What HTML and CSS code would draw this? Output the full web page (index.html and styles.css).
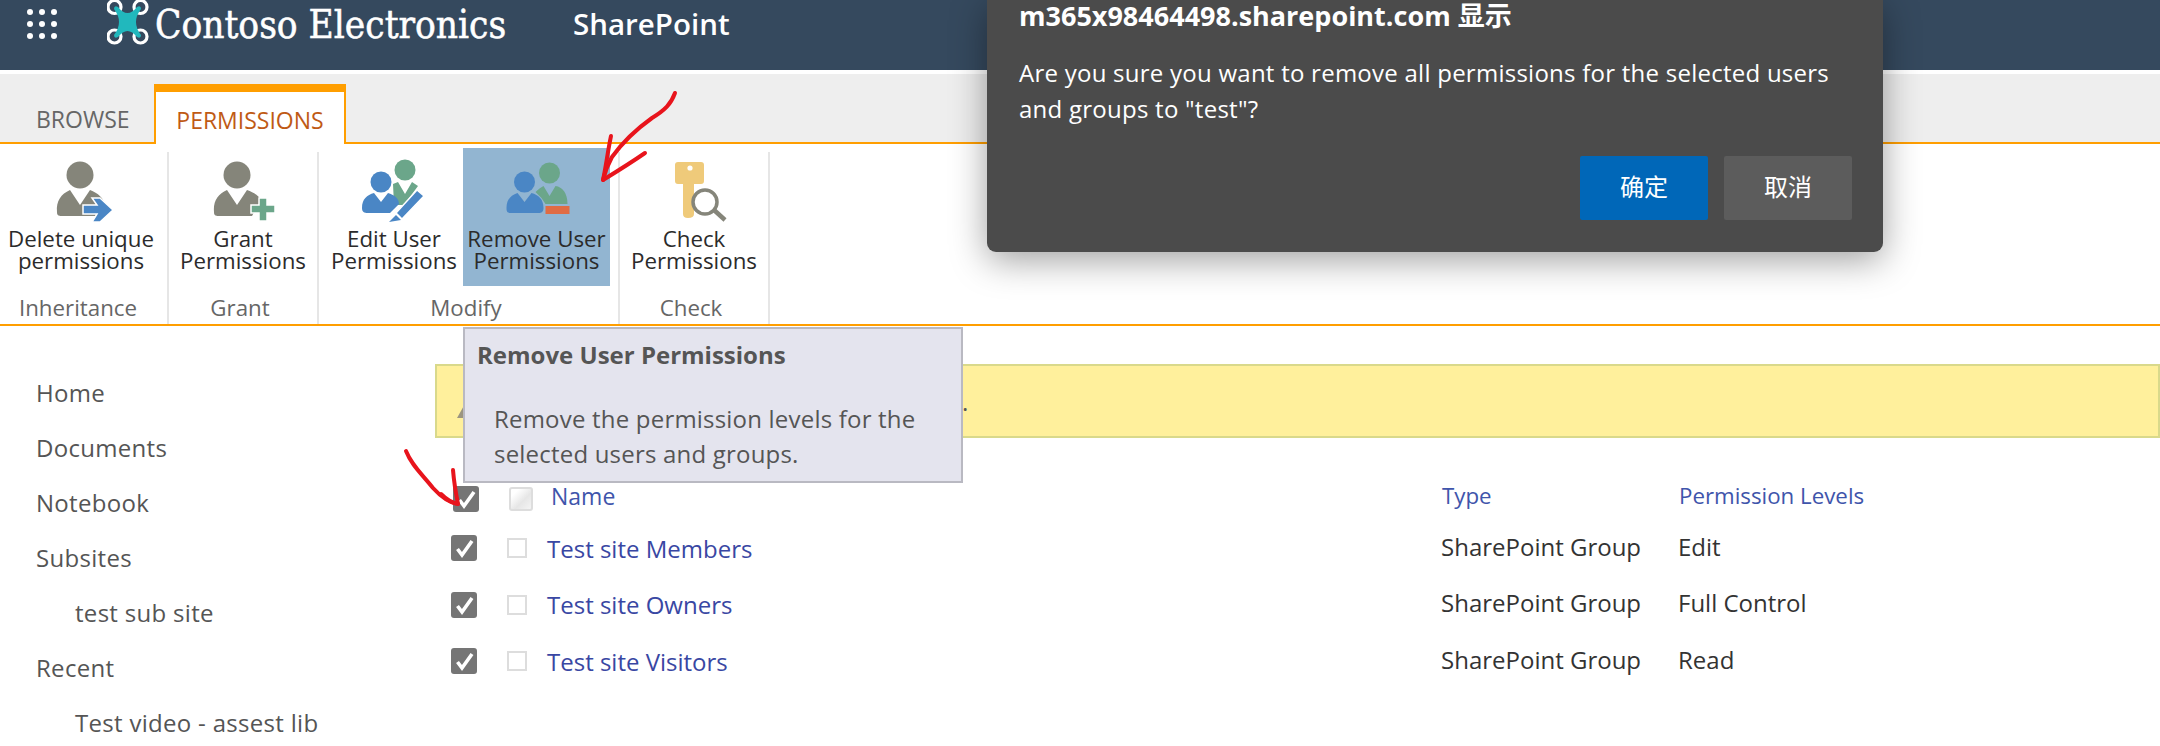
FILE: index.html
```html
<!DOCTYPE html>
<html lang="en">
<head>
<meta charset="utf-8">
<title>Permissions</title>
<link rel="stylesheet" href="styles.css">
</head>
<body>
<header class="suite-bar">
  <svg class="waffle" viewBox="0 0 36 36" width="36" height="36"><g fill="#fff"><circle cx="6" cy="6" r="3"/><circle cx="18" cy="6" r="3"/><circle cx="30" cy="6" r="3"/><circle cx="6" cy="18" r="3"/><circle cx="18" cy="18" r="3"/><circle cx="30" cy="18" r="3"/><circle cx="6" cy="30" r="3"/><circle cx="18" cy="30" r="3"/><circle cx="30" cy="30" r="3"/></g></svg>
  <svg class="logo" viewBox="107 0 44 46" width="44" height="46"><g fill="none" stroke="#fff" stroke-width="3.2"><circle cx="114.5" cy="7" r="6.5"/><circle cx="140.5" cy="7" r="6.5"/><circle cx="114.5" cy="36.5" r="6.5"/><circle cx="140.5" cy="36.5" r="6.5"/></g><path d="M114 9Q114 5 118 7Q127.5 19 137 7Q141 5 141 9Q131 22 141 35Q141 39 137 37Q127.5 25 118 37Q114 39 114 35Q124 22 114 9Z" fill="#21b8bd"/></svg>
  <span class="brand">Contoso Electronics</span>
  <span class="app">SharePoint</span>
</header>

<nav class="tab-strip">
  <span class="tab">BROWSE</span>
  <span class="tab tab-active">PERMISSIONS</span>
</nav>

<section class="ribbon">
  <div class="group g-inherit">
    <div class="buttons">
      <div class="rbtn b-delete">
        <svg class="ricon" viewBox="41 152 80 72"><circle cx="80" cy="175" r="13.5" fill="#85857a"/><path d="M57 212C56 201 61 194 70 190L80 205L90 190C98 193 104 198 105 206V216H62C58 216 57 215 57 212Z" fill="#85857a"/><path d="M83 205H97L92 198H100L113 210L100 222H92L97 214H83Z" fill="#4a86c5" stroke="#fff" stroke-width="1.5"/></svg>
        <span class="rlabel">Delete unique permissions</span>
      </div>
    </div>
    <div class="glabel">Inheritance</div>
  </div>
  <div class="group g-grant">
    <div class="buttons">
      <div class="rbtn b-grant">
        <svg class="ricon" viewBox="203 152 80 72"><circle cx="237" cy="175" r="13.5" fill="#85857a"/><path d="M214 212C213 201 218 194 227 190L237 205L247 190C255 193 259 196 261 200L252 216H219C215 216 214 215 214 212Z" fill="#85857a"/><path d="M259 198H267V205H275V213H267V221H259V213H251V205H259Z" fill="#6ba68a" stroke="#fff" stroke-width="1.5"/></svg>
        <span class="rlabel">Grant Permissions</span>
      </div>
    </div>
    <div class="glabel">Grant</div>
  </div>
  <div class="group g-modify">
    <div class="buttons">
      <div class="rbtn b-edit">
        <svg class="ricon" viewBox="354 152 80 72"><circle cx="405" cy="170" r="10.5" fill="#6ba68a"/><path d="M393 184L398 182L405 194L412 182L418 186L404 205H394Z" fill="#6ba68a"/><circle cx="381" cy="182" r="10.5" fill="#4a86c5"/><path d="M362 208C362 199 367 195 374 193L381 202L388 193C394 195 399 198 399 204L390 213H368C364 213 362 212 362 208Z" fill="#4a86c5"/><path d="M396 213L417 190L424 196L402 219Z" fill="#4a86c5" stroke="#fff" stroke-width="1.5"/><path d="M396 215L401 220L389 222Z" fill="#4a86c5"/></svg>
        <span class="rlabel">Edit User Permissions</span>
      </div>
      <div class="rbtn b-remove">
        <svg class="ricon" viewBox="496.5 152 80 72"><circle cx="549" cy="173" r="10.5" fill="#6ba68a"/><path d="M535 192C538 189 541 187 543 186L549 196L555 186C562 187 567 193 567 204H545L541 198Z" fill="#6ba68a"/><circle cx="524" cy="182" r="10.5" fill="#4a86c5"/><path d="M506 208C506 199 511 195 517 193L524 202L531 193C538 195 543 199 543 208C543 212 541 213 538 213H511C507 213 506 212 506 208Z" fill="#4a86c5"/><rect x="545" y="206" width="24" height="8" fill="#e06c44"/></svg>
        <span class="rlabel">Remove User Permissions</span>
      </div>
    </div>
    <div class="glabel">Modify</div>
  </div>
  <div class="group g-check">
    <div class="buttons">
      <div class="rbtn b-check">
        <svg class="ricon" viewBox="654 152 80 72"><path d="M678 162H701Q704 162 704 165V181Q704 184 701 184H694V214Q694 218 688 218Q683 218 683 214V184H678Q675 184 675 181V165Q675 162 678 162Z" fill="#efca7a"/><circle cx="690" cy="168" r="2.6" fill="#fff"/><circle cx="705" cy="202" r="12" fill="#fff" stroke="#85857a" stroke-width="3.5"/><path d="M714 210L725 220" stroke="#85857a" stroke-width="4.5" fill="none"/></svg>
        <span class="rlabel">Check Permissions</span>
      </div>
    </div>
    <div class="glabel">Check</div>
  </div>
</section>

<div class="main">
  <aside class="sidenav">
    <div class="nav-item">Home</div>
    <div class="nav-item">Documents</div>
    <div class="nav-item">Notebook</div>
    <div class="nav-item">Subsites</div>
    <div class="nav-item nav-sub">test sub site</div>
    <div class="nav-item">Recent</div>
    <div class="nav-item nav-sub">Test video - assest lib</div>
  </aside>
  <div class="content">
    <div class="notice"><span class="notice-mark"></span><span class="notice-dot">.</span></div>
    <div class="perm-grid perm-head">
      <span class="cb"><svg viewBox="0 0 26 26" width="26" height="26"><path d="M6.5 14L11 20L21 6" fill="none" stroke="#fff" stroke-width="3.6"/></svg></span>
      <span class="box box-head"></span>
      <span class="head-link head-name">Name</span>
      <span class="head-link">Type</span>
      <span class="head-link">Permission Levels</span>
    </div>
    <div class="perm-grid perm-row">
      <span class="cb"><svg viewBox="0 0 26 26" width="26" height="26"><path d="M6.5 14L11 20L21 6" fill="none" stroke="#fff" stroke-width="3.6"/></svg></span>
      <span class="box"></span>
      <span class="name-link">Test site Members</span>
      <span class="cell">SharePoint Group</span>
      <span class="cell">Edit</span>
    </div>
    <div class="perm-grid perm-row">
      <span class="cb"><svg viewBox="0 0 26 26" width="26" height="26"><path d="M6.5 14L11 20L21 6" fill="none" stroke="#fff" stroke-width="3.6"/></svg></span>
      <span class="box"></span>
      <span class="name-link">Test site Owners</span>
      <span class="cell">SharePoint Group</span>
      <span class="cell">Full Control</span>
    </div>
    <div class="perm-grid perm-row">
      <span class="cb"><svg viewBox="0 0 26 26" width="26" height="26"><path d="M6.5 14L11 20L21 6" fill="none" stroke="#fff" stroke-width="3.6"/></svg></span>
      <span class="box"></span>
      <span class="name-link">Test site Visitors</span>
      <span class="cell">SharePoint Group</span>
      <span class="cell">Read</span>
    </div>
  </div>
</div>

<div class="tooltip">
  <div class="tip-title">Remove User Permissions</div>
  <p class="tip-body">Remove the permission levels for the selected users and groups.</p>
</div>

<div class="dialog">
  <div class="dlg-title">m365x98464498.sharepoint.com 显示</div>
  <p class="dlg-text">Are you sure you want to remove all permissions for the selected users and groups to "test"?</p>
  <div class="dlg-actions">
    <span class="dlg-btn dlg-ok">确定</span>
    <span class="dlg-btn dlg-cancel">取消</span>
  </div>
</div>

<svg class="ink" viewBox="0 0 2160 746" width="2160" height="746">
  <g fill="none" stroke="#e8141c" stroke-width="4" stroke-linecap="round" stroke-linejoin="round">
    <path d="M675 93C671 104 665 110 652 118C638 128 622 143 612 157C607 166 605 172 603 180"/>
    <path d="M611 136C608 150 606 166 603 180C616 172 632 162 645 153"/>
    <path d="M406 451C412 466 422 474 433 488C442 498 450 503 458 504"/>
    <path d="M453 470C454 482 456 494 458 504C452 503 446 499 441 494"/>
  </g>
</svg>
</body>
</html>
```

FILE: styles.css
```css
* { box-sizing: border-box; }
html, body { margin: 0; padding: 0; }
body {
  position: relative;
  width: 2160px;
  height: 746px;
  overflow: hidden;
  background: #fff;
  font-family: "Open Sans", "Noto Sans CJK SC", sans-serif;
  font-size: 24px;
  color: #444;
}

/* suite bar */
.suite-bar {
  display: flex;
  align-items: flex-start;
  height: 70px;
  background: #35495e;
  color: #fff;
}
.waffle { margin: 6px 0 0 24px; }
.logo { margin-left: 47px; }
.brand {
  margin-left: 4px;
  width: 418px;
  font-family: "DejaVu Serif Condensed", "DejaVu Serif", serif;
  font-stretch: condensed;
  font-size: 38.4px;
  line-height: 50px;
  -webkit-text-stroke: 0.5px #fff;
}
.app {
  font-size: 29.5px;
  font-weight: 600;
  line-height: 48px;
}

/* tabs */
.tab-strip {
  display: flex;
  align-items: flex-end;
  height: 70px;
  margin-top: 4px;
  background: #eee;
  border-bottom: 2px solid #ff9e00;
}
.tab {
  width: 154px;
  height: 50px;
  padding-left: 36px;
  font-size: 23px;
  line-height: 54px;
  color: #666;
}
.tab-active {
  width: 192px;
  height: 60px;
  margin-bottom: -2px;
  padding: 0;
  text-align: center;
  background: #fff;
  border: solid #ff9e00;
  border-width: 8px 2px 0;
  line-height: 56px;
  color: #bf5a15;
}

/* ribbon */
.ribbon {
  display: flex;
  align-items: stretch;
  height: 182px;
  padding-top: 8px;
  border-bottom: 2px solid #ff9e00;
}
.group {
  display: flex;
  flex-direction: column;
  border-right: 2px solid #e6e6e6;
}
.g-inherit { width: 169px; }
.g-grant { width: 150px; }
.g-modify { width: 301px; }
.g-check { width: 150px; }
.buttons {
  display: flex;
  height: 134px;
  margin-top: -4px;
}
.rbtn {
  display: flex;
  flex-direction: column;
  align-items: center;
  height: 138px;
  padding-top: 4px;
  color: #2b2b2b;
}
.b-delete { width: 162px; }
.b-grant { width: 148px; }
.b-edit { width: 138px; margin-left: 6px; }
.b-remove { width: 147px; background: #92b5d1; }
.b-check { width: 148px; }
.ricon { width: 80px; height: 72px; flex: none; }
.rlabel {
  display: block;
  width: 146px;
  margin-top: 4px;
  text-align: center;
  font-size: 22.3px;
  line-height: 22px;
}
.b-delete .rlabel { width: 160px; }
.glabel {
  margin-top: 7px;
  line-height: 38px;
  text-align: center;
  font-size: 22.3px;
  color: #666;
}
.g-inherit .glabel { padding-right: 11px; }
.g-grant .glabel { padding-right: 6px; }
.g-modify .glabel { padding-right: 5px; }
.g-check .glabel { padding-right: 6px; }

/* page */
.main { display: flex; }
.sidenav { width: 435px; padding-top: 39px; flex: none; }
.nav-item {
  height: 55px;
  padding-left: 36px;
  line-height: 55px;
  letter-spacing: 0.3px;
  color: #555;
}
.nav-sub { padding-left: 75px; }
.content { flex: 1; padding-top: 38px; }
.notice {
  position: relative;
  height: 74px;
  background: #fff09c;
  border: 2px solid #d9d98b;
  margin-bottom: 39px;
}
.notice-mark {
  position: absolute;
  left: 20px;
  top: 36px;
  border-bottom: 16px solid #9b9580;
  border-left: 9px solid transparent;
  width: 9px;
}
.notice-dot {
  position: absolute;
  left: 525px;
  top: 21px;
  color: #555;
  line-height: 30px;
}
.perm-grid {
  display: grid;
  grid-template-columns: 56px 40px 894px 237px 1fr;
  align-items: center;
  padding-left: 16px;
}
.perm-head { height: 43px; padding-left: 18px; }
.perm-row { height: 56.5px; }
.cb {
  display: block;
  width: 26px;
  height: 26px;
  background: #757575;
  border-radius: 3px;
}
.cb svg { display: block; }
.box {
  display: block;
  width: 20px;
  height: 20px;
  border: 2px solid #ddd;
  background: #fff;
}
.box-head {
  width: 24px;
  height: 24px;
  border-radius: 3px;
  background: linear-gradient(135deg, #fff 20%, #e6e6e6 60%, #f4f4f4);
}
.head-link {
  margin-left: -1px;
  font-size: 22.3px;
  color: #3f55ab;
  padding-bottom: 6px;
}
.head-name { padding-left: 3px; font-size: 23px; }
.name-link { color: #3947a3; }
.cell { color: #333; padding-bottom: 4px; }

/* tooltip */
.tooltip {
  position: absolute;
  left: 463px;
  top: 327px;
  width: 500px;
  height: 156px;
  padding: 11px 12px 0;
  background: #e4e4ee;
  border: 2px solid #b9b9c2;
  color: #555;
}
.tip-title { font-weight: 700; font-size: 24px; line-height: 30px; }
.tip-body {
  margin: 31px 0 0 17px;
  line-height: 35px;
  letter-spacing: 0.2px;
}

/* dialog */
.dialog {
  position: absolute;
  left: 987px;
  top: 0;
  width: 896px;
  height: 252px;
  padding: 0 32px;
  background: #4b4b4b;
  border-radius: 0 0 9px 9px;
  box-shadow: 0 8px 36px rgba(0, 0, 0, 0.38);
  color: #fff;
}
.dlg-title {
  font-weight: 700;
  font-size: 27px;
  line-height: 32px;
}
.dlg-text {
  margin: 23px 0 0;
  line-height: 36px;
  width: 832px;
  letter-spacing: 0.25px;
}
.dlg-actions {
  display: flex;
  justify-content: flex-end;
  gap: 16px;
  margin: 29px -1px 0 0;
}
.dlg-btn {
  width: 128px;
  height: 64px;
  line-height: 61px;
  text-align: center;
  border-radius: 2px;
  font-size: 24px;
}
.dlg-ok { background: #0067b8; }
.dlg-cancel { background: #5c5c5c; }

/* hand-drawn annotations */
.ink {
  position: absolute;
  left: 0;
  top: 0;
  pointer-events: none;
}
```
